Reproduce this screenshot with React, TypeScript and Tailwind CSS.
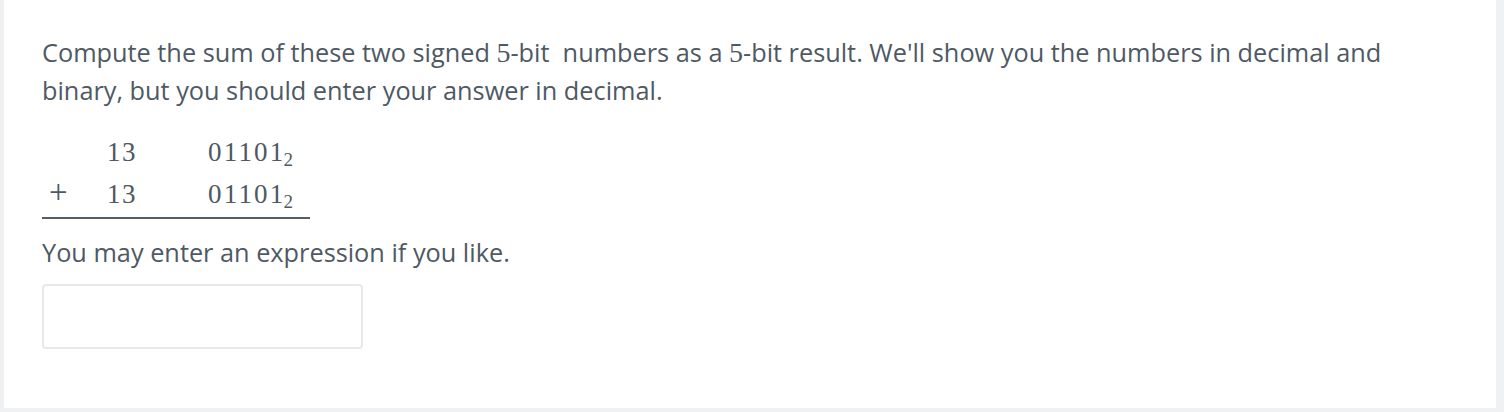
const textFont = { fontFamily: '"Open Sans", "Noto Sans", sans-serif' };

function Mn({ children }: { children: React.ReactNode }) {
  return (
    <span className="font-['Liberation_Serif',serif] text-[28px] leading-none">
      {children}
    </span>
  );
}

const rows = [
  { op: "", dec: "13", bin: "01101" },
  { op: "+", dec: "13", bin: "01101" },
];

export default function App() {
  return (
    <div className="min-h-[412px] w-full bg-[#f0f1f3] pl-[4px] pr-[8px] pb-[4px]">
      <div
        className="bg-white h-[408px] pl-[38px] pr-8 pt-[33px] text-[#4e5964]"
        style={textFont}
      >
        <p className="text-[25.3px] leading-[38px] max-w-[1400px]">
          Compute the sum of these two signed <Mn>5</Mn>-bit&nbsp; numbers as a{" "}
          <Mn>5</Mn>-bit result. We'll show you the numbers in decimal and
          binary, but you should enter your answer in decimal.
        </p>

        {/* addition table */}
        <div className="mt-[22px] w-[268px] border-b-2 border-[#555d66] pb-[2px] font-['Liberation_Serif',serif] text-[27px] tracking-[1.5px]">
          {rows.map((r, i) => (
            <div key={i} className="leading-[42px] whitespace-nowrap">
              <span className="inline-block w-[46px] pl-[7px]">
                <span className="inline-block text-[33px] leading-none">
                  {r.op}
                </span>
              </span>
              <span className="inline-block w-[49px] text-right">{r.dec}</span>
              <span className="inline-block ml-[71px]">
                <span className="tracking-[2.2px] -mr-[2px]">{r.bin}</span>
                <sub className="text-[19px] tracking-normal">2</sub>
              </span>
            </div>
          ))}
        </div>

        <p className="mt-[14px] text-[25.3px] leading-[38px]">
          You may enter an expression if you like.
        </p>

        <input
          type="text"
          aria-label="answer"
          className="mt-[13px] block w-[321px] h-[65px] rounded-[4px] border-2 border-[#e6e9ec] bg-white outline-none"
        />
      </div>
    </div>
  );
}
